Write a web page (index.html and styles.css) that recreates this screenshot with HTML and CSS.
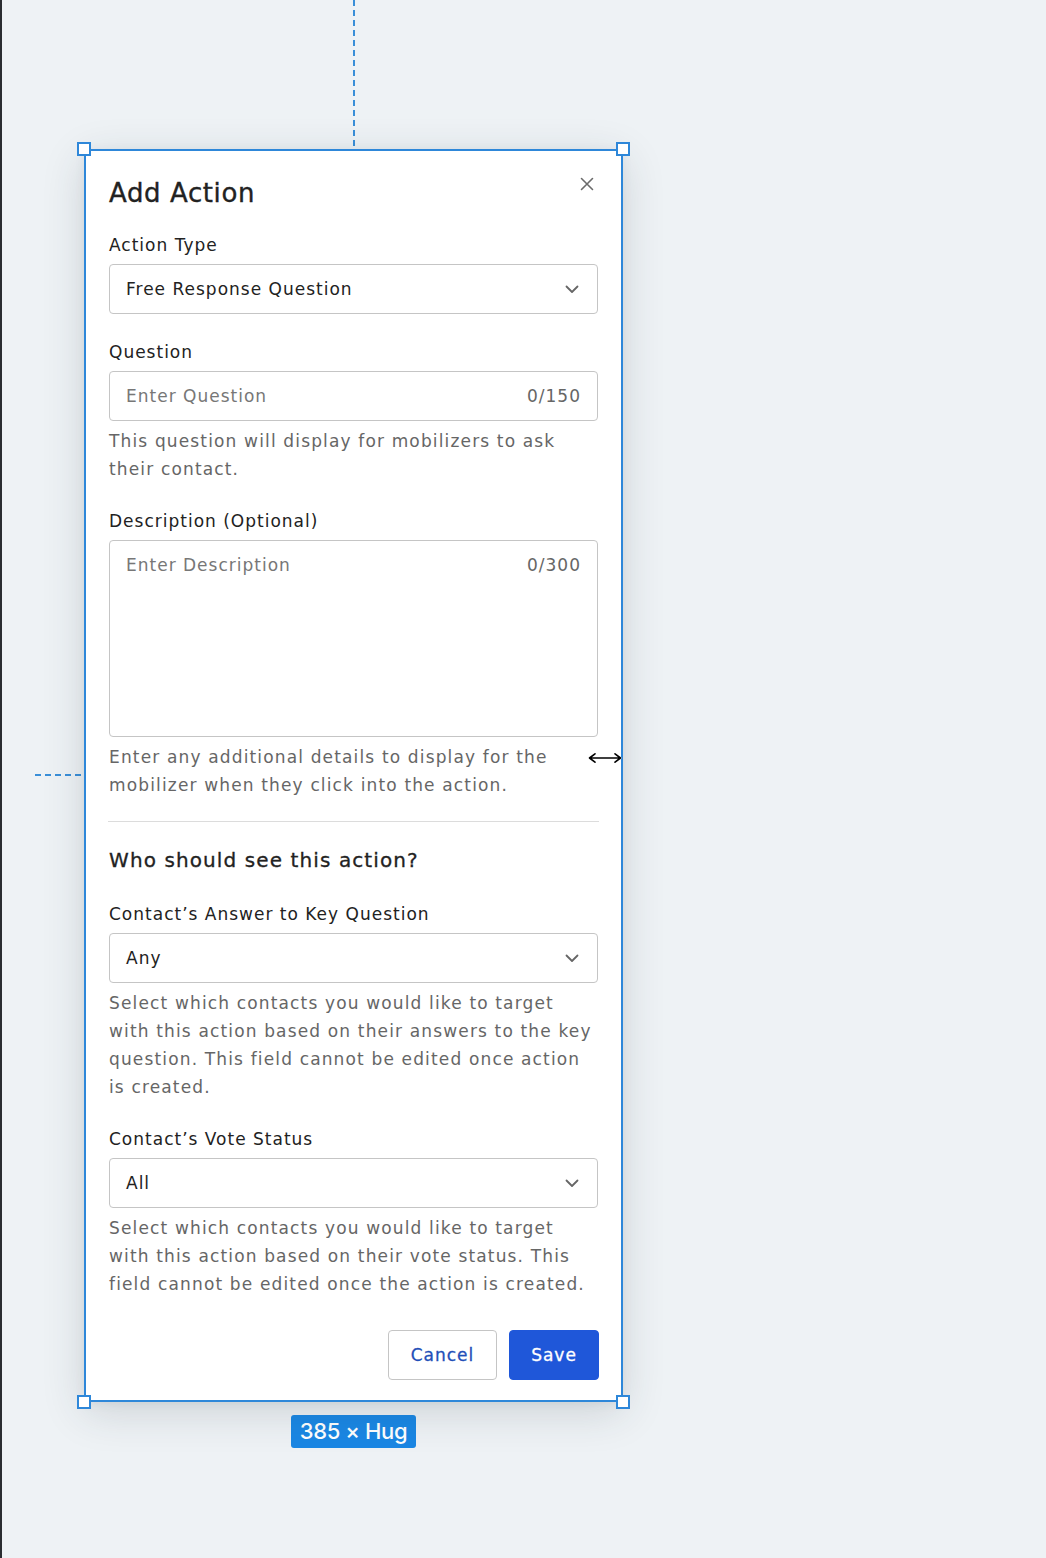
FILE: index.html
```html
<!DOCTYPE html>
<html lang="en">
<head>
<meta charset="utf-8">
<title>Add Action</title>
<link rel="stylesheet" href="styles.css">
</head>
<body>
<div class="canvas">
  <div class="guide guide-top"></div>
  <div class="guide guide-left"></div>

  <div class="frame">
    <div class="modal">
      <span class="handle h-tl"></span>
      <span class="handle h-tr"></span>
      <span class="handle h-bl"></span>
      <span class="handle h-br"></span>

      <button class="close" aria-label="Close">
        <svg width="14" height="14" viewBox="0 0 14 14"><path d="M1.5 1.5 L12.5 12.5 M12.5 1.5 L1.5 12.5" stroke="#6b6b6b" stroke-width="1.6" fill="none" stroke-linecap="round"/></svg>
      </button>

      <h1 class="title">Add Action</h1>

      <div class="field first">
        <label class="label">Action Type</label>
        <div class="control select">
          <span class="value">Free Response Question</span>
          <svg class="chev" width="14" height="9" viewBox="0 0 14 9"><path d="M1.5 1.5 L7 7 L12.5 1.5" stroke="#666" stroke-width="1.8" fill="none" stroke-linecap="round" stroke-linejoin="round"/></svg>
        </div>
      </div>

      <div class="field">
        <label class="label">Question</label>
        <div class="control input">
          <span class="placeholder">Enter Question</span>
          <span class="count">0/150</span>
        </div>
        <p class="help">This question will display for mobilizers to ask their contact.</p>
      </div>

      <div class="field">
        <label class="label">Description (Optional)</label>
        <div class="control textarea">
          <span class="placeholder">Enter Description</span>
          <span class="count">0/300</span>
        </div>
        <p class="help">Enter any additional details to display for the mobilizer when they click into the action.</p>
      </div>

      <hr class="divider">

      <h2 class="subtitle">Who should see this action?</h2>

      <div class="field sub-first">
        <label class="label">Contact’s Answer to Key Question</label>
        <div class="control select">
          <span class="value">Any</span>
          <svg class="chev" width="14" height="9" viewBox="0 0 14 9"><path d="M1.5 1.5 L7 7 L12.5 1.5" stroke="#666" stroke-width="1.8" fill="none" stroke-linecap="round" stroke-linejoin="round"/></svg>
        </div>
        <p class="help">Select which contacts you would like to target with this action based on their answers to the key question. This field cannot be edited once action is created.</p>
      </div>

      <div class="field">
        <label class="label">Contact’s Vote Status</label>
        <div class="control select">
          <span class="value">All</span>
          <svg class="chev" width="14" height="9" viewBox="0 0 14 9"><path d="M1.5 1.5 L7 7 L12.5 1.5" stroke="#666" stroke-width="1.8" fill="none" stroke-linecap="round" stroke-linejoin="round"/></svg>
        </div>
        <p class="help">Select which contacts you would like to target with this action based on their vote status. This field cannot be edited once the action is created.</p>
      </div>

      <div class="actions">
        <button class="btn btn-cancel">Cancel</button>
        <button class="btn btn-save">Save</button>
      </div>

      <svg class="cursor" width="40" height="16" viewBox="0 0 40 16">
        <path d="M3 8 L10 2.5 L10 6 L30 6 L30 2.5 L37 8 L30 13.5 L30 10 L10 10 L10 13.5 Z" fill="#fff"/>
        <path d="M4.5 8 L10 3.8 M4.5 8 L10 12.2 M4.5 8 L35.5 8 M35.5 8 L30 3.8 M35.5 8 L30 12.2" stroke="#000" stroke-width="1.6" fill="none" stroke-linecap="round"/>
      </svg>
    </div>
    <div class="size-badge">385 × Hug</div>
  </div>
</div>
</body>
</html>
```

FILE: styles.css
```css
* { box-sizing: border-box; }

html, body {
  margin: 0;
  padding: 0;
}

body {
  background: #eef2f5;
  font-family: "DejaVu Sans", "Open Sans", sans-serif;
  color: #222;
  min-height: 1558px;
  border-left: 2px solid #2a2d31;
}

.canvas {
  position: relative;
  min-height: 1558px;
}

.guide {
  position: absolute;
}
.guide-top {
  left: 351px;
  top: 0;
  height: 146px;
  width: 0;
  border-left: 2px dashed #3a8fd8;
}
.guide-left {
  left: 33px;
  top: 774px;
  width: 46px;
  height: 0;
  border-top: 2px dashed #3a8fd8;
}

.frame {
  padding: 149px 0 0 82px;
  width: 621px;
  display: flex;
  flex-direction: column;
  align-items: center;
}

.modal {
  position: relative;
  width: 539px;
  flex: none;
  background: #fff;
  border: 2px solid #2e87d9;
  padding: 24px 23px 20px 23px;
  box-shadow: 0 10px 40px rgba(40, 50, 60, 0.16), 0 2px 10px rgba(40, 50, 60, 0.06);
}

.handle {
  position: absolute;
  width: 14px;
  height: 14px;
  background: #fff;
  border: 2px solid #2e87d9;
}
.h-tl { left: -9px; top: -9px; }
.h-tr { right: -9px; top: -9px; }
.h-bl { left: -9px; bottom: -9px; }
.h-br { right: -9px; bottom: -9px; }

.close {
  position: absolute;
  top: 25px;
  right: 26px;
  width: 16px;
  height: 16px;
  padding: 0;
  border: 0;
  background: transparent;
  display: flex;
  align-items: center;
  justify-content: center;
}

.title {
  margin: 0;
  font-size: 26px;
  line-height: 36px;
  font-weight: normal;
  -webkit-text-stroke: 0.35px #222;
  color: #222;
  letter-spacing: 0.6px;
}

.field {
  display: flex;
  flex-direction: column;
  margin-top: 26px;
}
.field.first { margin-top: 22px; }
.field.sub-first { margin-top: 28px; }

.label {
  font-size: 17px;
  line-height: 24px;
  color: #222;
  letter-spacing: 1px;
  margin-bottom: 7px;
}

.control {
  border: 1px solid #c5c5c5;
  border-radius: 4px;
  background: #fff;
  display: flex;
  justify-content: space-between;
  font-size: 17px;
  letter-spacing: 1px;
  padding: 0 16px 0 16px;
}
.select, .input {
  height: 50px;
  align-items: center;
}
.textarea {
  height: 197px;
  align-items: flex-start;
  padding-top: 12px;
  line-height: 24px;
}

.value { color: #222; }
.placeholder { color: #777; }
.count { color: #666; }

.chev { margin-right: 2px; }

.help {
  margin: 6px 0 0 0;
  font-size: 17px;
  line-height: 28px;
  color: #666;
  letter-spacing: 1.15px;
}

.divider {
  margin: 22px -1px 0 -1px;
  border: 0;
  border-top: 1px solid #dcdcdc;
  height: 0;
}

.subtitle {
  margin: 24px 0 0 0;
  font-size: 20px;
  line-height: 28px;
  font-weight: normal;
  -webkit-text-stroke: 0.3px #222;
  color: #222;
  letter-spacing: 1.1px;
}

.actions {
  display: flex;
  justify-content: flex-end;
  gap: 12px;
  margin-top: 32px;
}

.btn {
  height: 50px;
  border-radius: 4px;
  font-family: inherit;
  font-size: 17px;
  font-weight: normal;
  letter-spacing: 1px;
  cursor: pointer;
}
.btn-cancel {
  width: 109px;
  background: #fff;
  border: 1px solid #c5c5c5;
  color: #1f4fb8;
  -webkit-text-stroke: 0.3px #1f4fb8;
}
.btn-save {
  width: 90px;
  margin-right: -1px;
  background: #1f57d9;
  border: 1px solid #1f57d9;
  color: #fff;
  -webkit-text-stroke: 0.3px #fff;
}

.cursor {
  position: absolute;
  right: -4px;
  top: 599px;
}

.size-badge {
  margin-top: 13px;
  background: #1a87e4;
  color: #fff;
  font-family: Inter, "Noto Sans", sans-serif;
  font-size: 22px;
  line-height: 33px;
  padding: 0 9px;
  border-radius: 3px;
  font-weight: 500;
  letter-spacing: -0.4px;
}
```
